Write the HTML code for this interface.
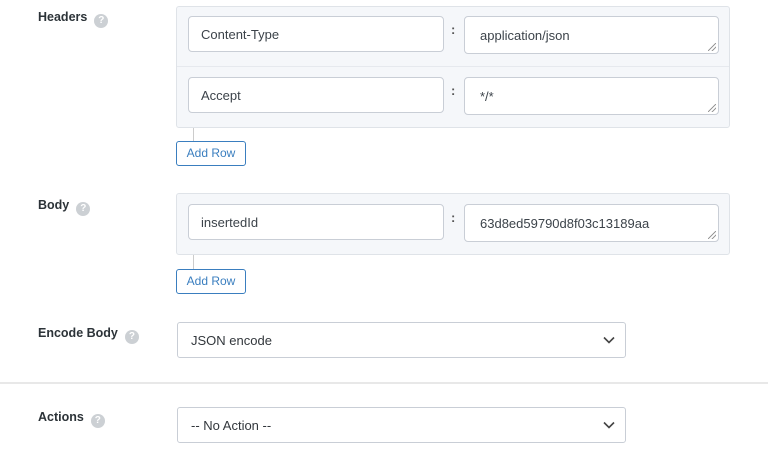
<!DOCTYPE html>
<html><head><meta charset="utf-8"><style>
*{box-sizing:border-box;margin:0;padding:0}
body{width:768px;height:469px;background:#fff;font-family:"Liberation Sans",sans-serif;font-size:13px;color:#32373c;position:relative;overflow:hidden}
.a{position:absolute}
.lbl{font-weight:bold;font-size:12.5px;color:#2c3338}
.q{display:inline-block;width:14px;height:14px;border-radius:50%;background:#ccd0d4;color:#fff;font-size:10px;text-align:center;line-height:14px;font-weight:bold;margin-left:7px;vertical-align:-2px}
.panel{background:#f5f7fa;border:1px solid #dfe3e8;border-radius:3px}
.in{background:#fff;border:1px solid #c9ced6;border-radius:4px;padding:0 12px;display:flex;align-items:center;font-size:13px;color:#3c434a}
.v{padding-left:15px}
.col{font-weight:bold;font-size:13px;color:#555}
.btn{border:1px solid #3a7ebf;border-radius:3px;background:#fff;color:#3a7ebf;font-size:12px;text-align:center;line-height:22px}
.grip{position:absolute;right:2px;bottom:2px;width:8px;height:8px;background:linear-gradient(135deg,transparent 45%,#999 45%,#999 55%,transparent 55%,transparent 70%,#999 70%,#999 80%,transparent 80%)}
.sel{background:#fff;border:1px solid #c9ced6;border-radius:3px;padding:0 13px;display:flex;align-items:center;font-size:13px;color:#32373c}
.chev{position:absolute;right:10px;top:13px}
</style></head><body>
<div class="a lbl" style="left:38px;top:10px">Headers<span class="q">?</span></div>
<div class="a panel" style="left:176px;top:6px;width:554px;height:122px"></div>
<div class="a" style="left:177px;top:66px;width:552px;height:1px;background:#e6e9ee"></div>
<div class="a in" style="left:188px;top:16px;width:256px;height:36px">Content-Type</div>
<div class="a col" style="left:451px;top:22px">:</div>
<div class="a in v" style="left:464px;top:16px;width:255px;height:38px">application/json<div class="grip"></div></div>
<div class="a in" style="left:188px;top:77px;width:256px;height:36px">Accept</div>
<div class="a col" style="left:451px;top:83px">:</div>
<div class="a in v" style="left:464px;top:77px;width:255px;height:38px">*/*<div class="grip"></div></div>
<div class="a" style="left:193px;top:128px;width:1px;height:13px;background:#ccc"></div>
<div class="a btn" style="left:176px;top:141px;width:70px;height:25px">Add Row</div>

<div class="a lbl" style="left:38px;top:198px">Body<span class="q">?</span></div>
<div class="a panel" style="left:176px;top:193px;width:554px;height:62px"></div>
<div class="a in" style="left:188px;top:204px;width:256px;height:36px">insertedId</div>
<div class="a col" style="left:451px;top:210px">:</div>
<div class="a in v" style="left:464px;top:204px;width:255px;height:38px">63d8ed59790d8f03c13189aa<div class="grip"></div></div>
<div class="a" style="left:193px;top:255px;width:1px;height:14px;background:#ccc"></div>
<div class="a btn" style="left:176px;top:269px;width:70px;height:25px">Add Row</div>

<div class="a lbl" style="left:38px;top:326px">Encode Body<span class="q">?</span></div>
<div class="a sel" style="left:177px;top:322px;width:449px;height:36px">JSON encode<svg class="chev" width="12" height="8" viewBox="0 0 12 8"><path d="M1 1.5l5 5 5-5" fill="none" stroke="#444" stroke-width="1.6"/></svg></div>
<div class="a" style="left:0;top:382px;width:768px;height:2px;background:#e8e8e8"></div>
<div class="a lbl" style="left:38px;top:410px">Actions<span class="q">?</span></div>
<div class="a sel" style="left:177px;top:407px;width:449px;height:36px">-- No Action --<svg class="chev" width="12" height="8" viewBox="0 0 12 8"><path d="M1 1.5l5 5 5-5" fill="none" stroke="#444" stroke-width="1.6"/></svg></div>
</body></html>
